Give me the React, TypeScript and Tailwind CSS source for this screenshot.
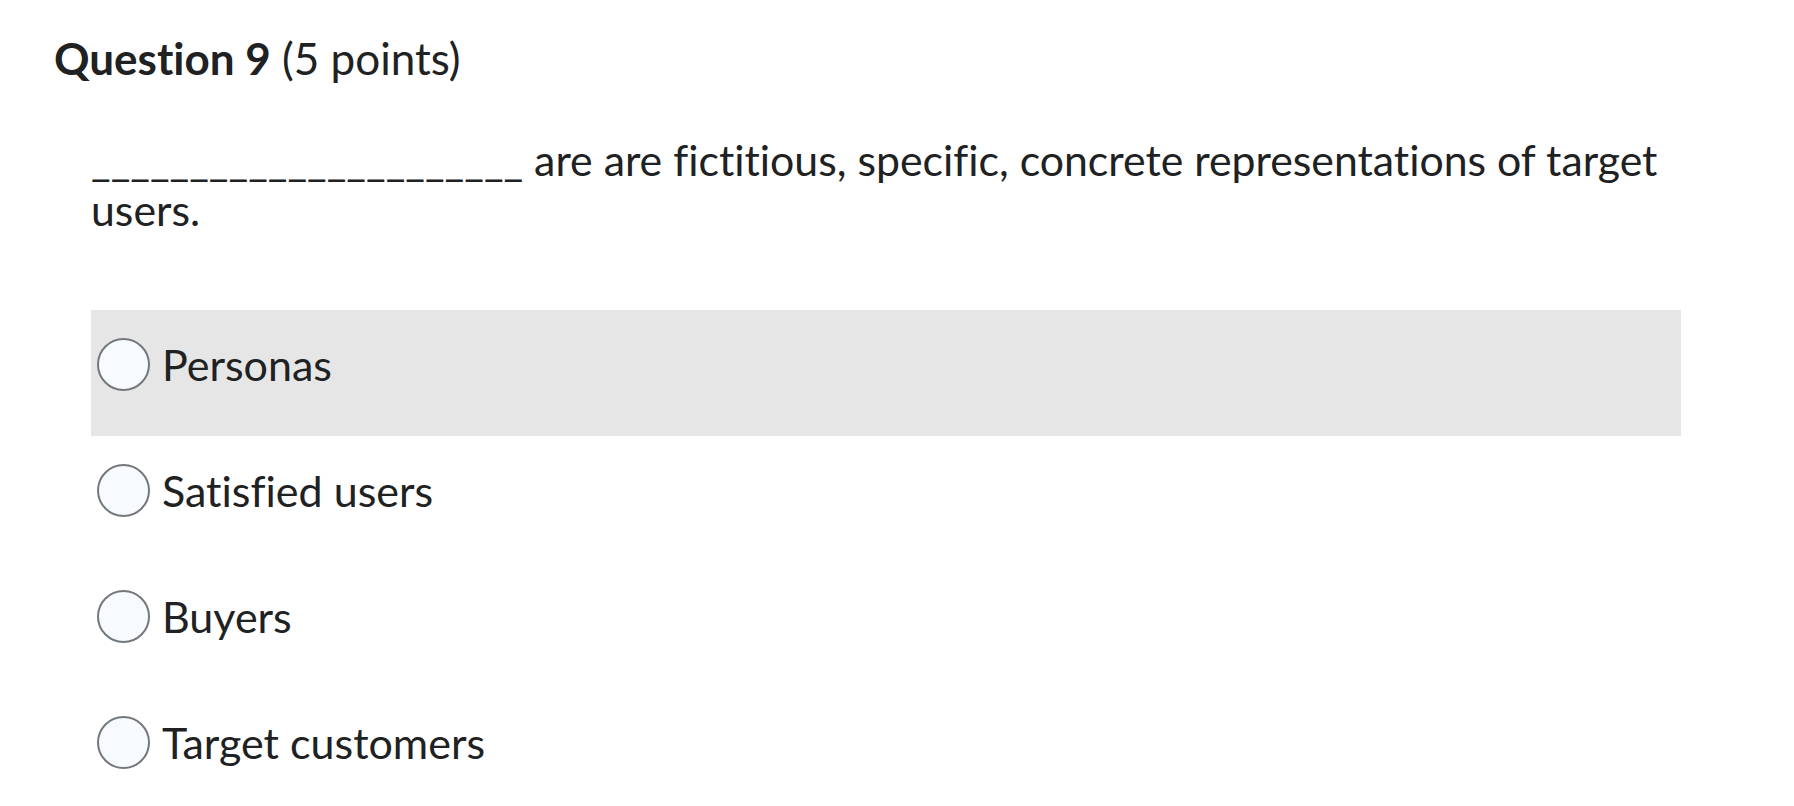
const options = ['Personas', 'Satisfied users', 'Buyers', 'Target customers']

function Radio() {
  return (
    <span className="block size-[53px] shrink-0 rounded-full border-2 border-[#74787c] bg-[#f7faff]" />
  )
}

export default function App() {
  return (
    <main
      className="min-h-screen bg-white pt-[32px] text-[#202122] [font-variant-ligatures:none]"
      style={{ fontFamily: 'Lato, "Noto Sans", sans-serif' }}
    >
      <h2 className="pl-[54px] text-[44px] leading-[1.2]">
        <span className="font-bold">Question 9</span> (5 points)
      </h2>

      <div className="mt-[50px] ml-[91px] w-[1590px]">
        <p className="text-[42.8px] leading-[50px]">
          ______________________ are are fictitious, specific, concrete representations of target users.
        </p>

        <div className="mt-[75px] flex flex-col">
          {options.map((option, index) => (
            <label
              key={option}
              className={
                index === 0
                  ? 'flex h-[126px] items-start bg-[#e6e6e6] px-[6px] pt-[28px]'
                  : 'flex h-[126px] items-start px-[6px] pt-[28px]'
              }
            >
              <span className="flex h-[53px] items-center gap-[12px]">
                <Radio />
                <span className="text-[43px] leading-[1.2]">{option}</span>
              </span>
            </label>
          ))}
        </div>
      </div>
    </main>
  )
}
